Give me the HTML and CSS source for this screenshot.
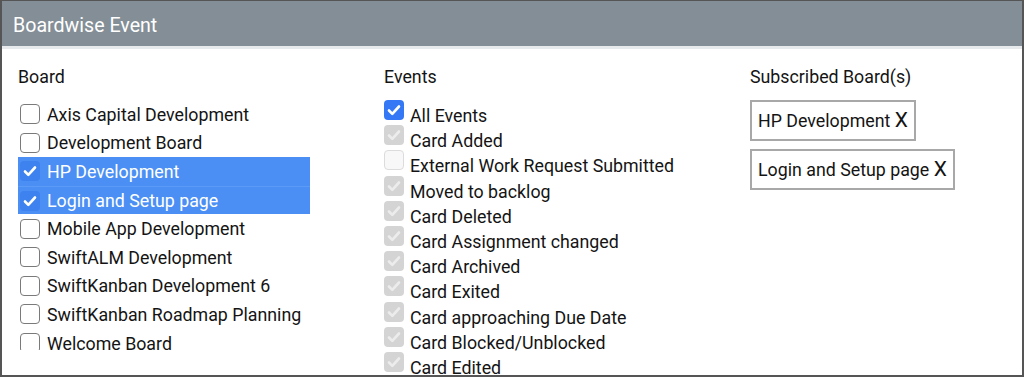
FILE: index.html
```html
<!DOCTYPE html>
<html lang="en">
<head>
  <meta charset="UTF-8">
  <title>Boardwise Event</title>
  <link rel="stylesheet" href="styles.css">
</head>
<body>

<div class="panel">
  <div class="panel-header">Boardwise Event</div>

  <div class="panel-body">

    <!-- BOARDS -->
    <div class="column">
      <div class="column-title">Board</div>
      <div class="board-list">
        <label class="board-item"><span class="box"></span>Axis Capital Development</label>
        <label class="board-item"><span class="box"></span>Development Board</label>
        <label class="board-item selected"><span class="box checked"><svg viewBox="0 0 20 20"><path d="M5 10.5l3.3 3.3L15 6.5"/></svg></span>HP Development</label>
        <label class="board-item selected"><span class="box checked"><svg viewBox="0 0 20 20"><path d="M5 10.5l3.3 3.3L15 6.5"/></svg></span>Login and Setup page</label>
        <label class="board-item"><span class="box"></span>Mobile App Development</label>
        <label class="board-item"><span class="box"></span>SwiftALM Development</label>
        <label class="board-item"><span class="box"></span>SwiftKanban Development 6</label>
        <label class="board-item"><span class="box"></span>SwiftKanban Roadmap Planning</label>
        <label class="board-item"><span class="box"></span>Welcome Board</label>
      </div>
    </div>

    <!-- EVENTS -->
    <div class="column">
      <div class="column-title">Events</div>
      <div class="event-list">
        <label class="event-item"><span class="box active"><svg viewBox="0 0 20 20"><path d="M5 10.5l3.3 3.3L15 6.5"/></svg></span>All Events</label>
        <label class="event-item"><span class="box disabled"><svg viewBox="0 0 20 20"><path d="M5 10.5l3.3 3.3L15 6.5"/></svg></span>Card Added</label>
        <label class="event-item"><span class="box disabled empty"></span>External Work Request Submitted</label>
        <label class="event-item"><span class="box disabled"><svg viewBox="0 0 20 20"><path d="M5 10.5l3.3 3.3L15 6.5"/></svg></span>Moved to backlog</label>
        <label class="event-item"><span class="box disabled"><svg viewBox="0 0 20 20"><path d="M5 10.5l3.3 3.3L15 6.5"/></svg></span>Card Deleted</label>
        <label class="event-item"><span class="box disabled"><svg viewBox="0 0 20 20"><path d="M5 10.5l3.3 3.3L15 6.5"/></svg></span>Card Assignment changed</label>
        <label class="event-item"><span class="box disabled"><svg viewBox="0 0 20 20"><path d="M5 10.5l3.3 3.3L15 6.5"/></svg></span>Card Archived</label>
        <label class="event-item"><span class="box disabled"><svg viewBox="0 0 20 20"><path d="M5 10.5l3.3 3.3L15 6.5"/></svg></span>Card Exited</label>
        <label class="event-item"><span class="box disabled"><svg viewBox="0 0 20 20"><path d="M5 10.5l3.3 3.3L15 6.5"/></svg></span>Card approaching Due Date</label>
        <label class="event-item"><span class="box disabled"><svg viewBox="0 0 20 20"><path d="M5 10.5l3.3 3.3L15 6.5"/></svg></span>Card Blocked/Unblocked</label>
        <label class="event-item"><span class="box disabled"><svg viewBox="0 0 20 20"><path d="M5 10.5l3.3 3.3L15 6.5"/></svg></span>Card Edited</label>
      </div>
    </div>

    <!-- SUBSCRIBED -->
    <div class="column">
      <div class="column-title">Subscribed Board(s)</div>
      <div class="subscribed-list">
        <div class="tag">HP Development <span class="tag-remove">X</span></div>
        <div class="tag">Login and Setup page <span class="tag-remove">X</span></div>
      </div>
    </div>

  </div>
</div>

</body>
</html>
```

FILE: styles.css
```css
body {
  margin: 0;
  font-family: Roboto, "Liberation Sans", Arial, sans-serif;
  color: #141414;
  background: #fff;
}

.panel {
  width: 1024px;
  height: 377px;
  box-sizing: border-box;
  border: 2px solid #555;
  border-top-width: 1px;
  overflow: hidden;
  background: #fff;
}

.panel-header {
  height: 45px;
  line-height: 50px;
  padding-left: 11px;
  background: #848e97;
  color: #fff;
  font-size: 19.6px;
  border-bottom: 3px solid #e7eaec;
}

.panel-body {
  display: grid;
  grid-template-columns: 366px 366px 1fr;
  padding: 17px 0 0 16px;
}

.column-title {
  font-size: 17.8px;
  line-height: 22px;
  margin-bottom: 12px;
}

/* Checkbox squares */
.box {
  flex: 0 0 auto;
  width: 20px;
  height: 20px;
  box-sizing: border-box;
  border: 1.5px solid #7a7a7a;
  border-radius: 4px;
  background: #fff;
  display: flex;
  align-items: center;
  justify-content: center;
}

.box svg {
  width: 20px;
  height: 20px;
  fill: none;
  stroke: #fff;
  stroke-width: 2.6;
  stroke-linecap: round;
  stroke-linejoin: round;
}

.box.checked {
  border: none;
  background: #3d82ee;
}

.box.active {
  border: none;
  background: #3478f6;
}

.box.disabled {
  border: none;
  background: #d4d4d4;
}

.box.disabled svg {
  stroke: #ececec;
}

.box.disabled.empty {
  border: 1px solid #dcdcdc;
  background: #f8f8f8;
}

/* Board list */
.board-list {
  width: 292px;
  height: 250px;
  margin-top: 1px;
  overflow: hidden;
}

.board-item {
  display: flex;
  align-items: center;
  gap: 7px;
  height: 28.6px;
  padding-left: 2px;
  font-size: 17.8px;
  white-space: nowrap;
}

.board-item.selected {
  background: #4b8ff5;
  color: #fff;
}

.board-item.selected + .board-item.selected {
  border-top: 1px solid #5b9af6;
  box-sizing: border-box;
}

/* Events list */
.event-item {
  display: flex;
  align-items: flex-start;
  gap: 6px;
  height: 25.2px;
  font-size: 17.8px;
  line-height: 31px;
  white-space: nowrap;
}

/* Subscribed boards */
.subscribed-list {
  display: flex;
  flex-direction: column;
  align-items: flex-start;
  gap: 8px;
}

.tag {
  border: 2px solid #a8a8a8;
  padding: 7px 6px;
  font-size: 17.8px;
  line-height: 22px;
}

.tag-remove {
  font-size: 21px;
}
```
